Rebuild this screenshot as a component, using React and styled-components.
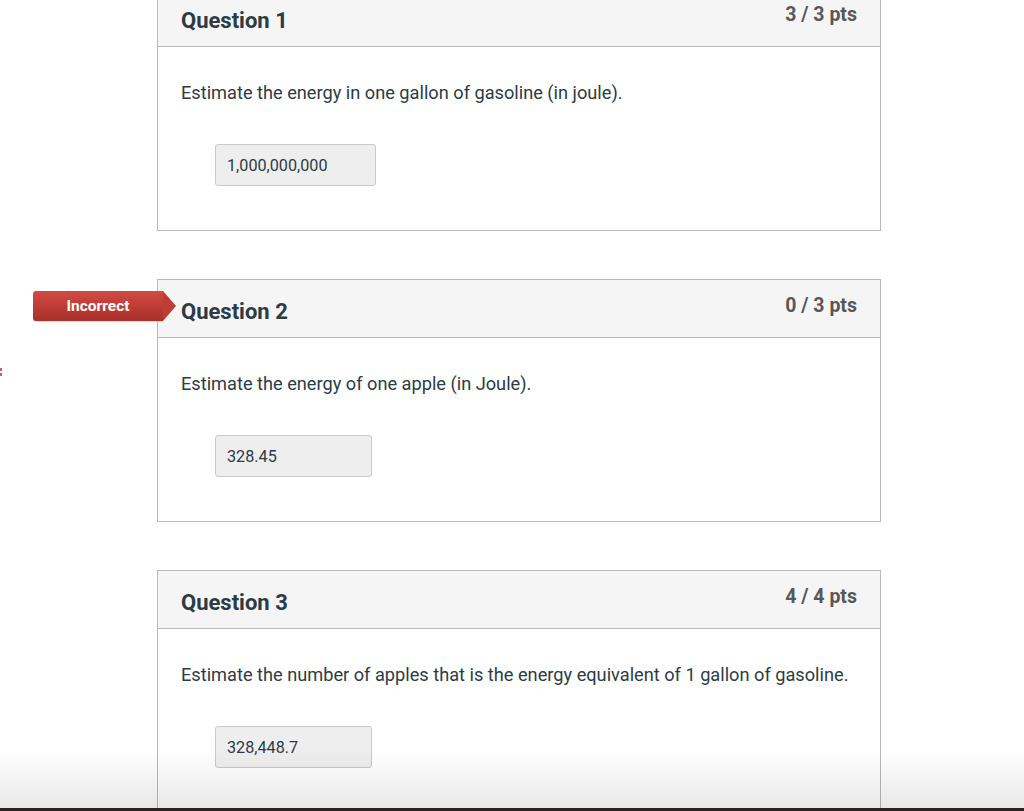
import React from "react";
import styled, { createGlobalStyle } from "styled-components";

const Global = createGlobalStyle`
  html, body { margin: 0; padding: 0; background: #fff; overflow: hidden; }
  body { font-family: Roboto, "Liberation Sans", Arial, sans-serif; color: #2d3b45; }
`;

const Page = styled.div`
  position: relative;
  height: 811px;
  overflow: hidden;
`;

const Column = styled.div`
  margin-top: -12px;
  margin-left: 157px;
  width: 724px;
  display: flex;
  flex-direction: column;
  gap: 48px;
`;

const Card = styled.section`
  position: relative;
  border: 1px solid #b9b9b9;
  background: #fff;
`;

const Header = styled.header`
  height: 58px;
  box-sizing: border-box;
  background: #f5f5f5;
  border-bottom: 1px solid #b9b9b9;
  display: flex;
  justify-content: space-between;
  align-items: flex-start;
  padding: 0 23px 0 23px;
`;

const Title = styled.h2`
  margin: 20px 0 0;
  font-size: 22px;
  line-height: 24px;
  font-weight: 700;
  color: #2d3b45;
`;

const Points = styled.div`
  margin-top: 15px;
  font-size: 19.5px;
  line-height: 22px;
  font-weight: 700;
  color: #585858;
`;

const Body = styled.div`
  height: 183px;
  box-sizing: border-box;
  padding: 34px 23px 0;
`;

const Prompt = styled.p`
  margin: 0;
  font-size: 18.2px;
  line-height: 24px;
  color: #2d3b45;
`;

const Answer = styled.div`
  margin: 39px 0 0 34px;
  width: ${(p) => p.$w}px;
  height: 42px;
  box-sizing: border-box;
  display: flex;
  align-items: center;
  padding-left: 11px;
  background: #eeeeee;
  border: 1px solid #c9c9c9;
  border-radius: 3px;
  font-size: 16.2px;
  color: #2d3b45;
`;

const Badge = styled.div`
  position: absolute;
  left: -125px;
  top: 11px;
  width: 130px;
  height: 30px;
  border-radius: 3px 0 0 3px;
  background: linear-gradient(#d24a43, #a9302b);
  color: #fff;
  font-weight: 700;
  font-size: 15.5px;
  display: flex;
  align-items: center;
  justify-content: center;
  box-shadow: 0 1px 1px rgba(0,0,0,0.15);
  &::after {
    content: "";
    position: absolute;
    right: -13px;
    top: 0;
    border-top: 15px solid transparent;
    border-bottom: 15px solid transparent;
    border-left: 13px solid #bd3c36;
  }
`;

const EdgeMark = styled.span`
  position: absolute;
  left: 0;
  top: 368px;
  width: 2px;
  height: 8px;
  background: linear-gradient(#c02f6a 0 35%, transparent 35% 60%, #c02f6a 60%);
  opacity: 0.8;
`;

const BottomShade = styled.div`
  position: fixed;
  left: 0;
  right: 0;
  bottom: 0;
  height: 62px;
  background: linear-gradient(rgba(0,0,0,0), rgba(0,0,0,0.09) 95%, #2b2022 95%, #2b2022);
  pointer-events: none;
`;

const questions = [
  { title: "Question 1", pts: "3 / 3 pts", text: "Estimate the energy in one gallon of gasoline (in joule).", answer: "1,000,000,000", w: 161 },
  { title: "Question 2", pts: "0 / 3 pts", text: "Estimate the energy of one apple (in Joule).", answer: "328.45", w: 157, incorrect: true },
  { title: "Question 3", pts: "4 / 4 pts", text: "Estimate the number of apples that is the energy equivalent of 1 gallon of gasoline.", answer: "328,448.7", w: 157 },
];

export default function App() {
  return (
    <Page>
      <Global />
      <EdgeMark />
      <Column>
        {questions.map((q) => (
          <Card key={q.title}>
            {q.incorrect && <Badge>Incorrect</Badge>}
            <Header>
              <Title>{q.title}</Title>
              <Points>{q.pts}</Points>
            </Header>
            <Body>
              <Prompt>{q.text}</Prompt>
              <Answer $w={q.w}>{q.answer}</Answer>
            </Body>
          </Card>
        ))}
      </Column>
      <BottomShade />
    </Page>
  );
}
